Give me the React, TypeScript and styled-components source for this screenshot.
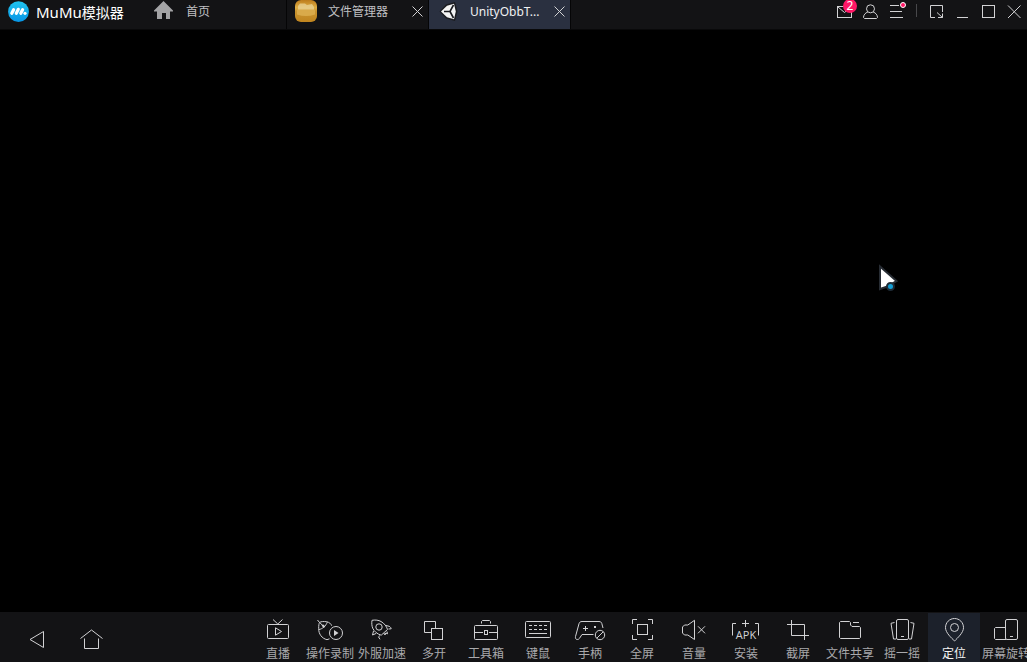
import React from 'react';
import styled, { createGlobalStyle } from 'styled-components';

const GlobalStyle = createGlobalStyle`
  * { box-sizing: border-box; }
  html, body, #root { height: 100%; }
  body {
    margin: 0;
    background: #000;
    overflow: hidden;
    font-family: "Noto Sans", "Noto Sans CJK SC", sans-serif;
  }
  button {
    margin: 0;
    padding: 0;
    border: 0;
    background: none;
    color: inherit;
    font: inherit;
    cursor: pointer;
  }
  svg { display: block; flex: none; }
`;

const Window = styled.div`
  display: flex;
  flex-direction: column;
  height: 100%;
  min-height: 320px;
  color: #c0c0c3;
`;

const TitleBar = styled.header`
  flex: none;
  display: flex;
  height: 30px;
  background: #131315;
  border-bottom: 1px solid #09090a;
`;

const Brand = styled.div`
  flex: none;
  display: flex;
  align-items: center;
  gap: 7px;
  width: 145px;
  height: 24px;
  padding-left: 8px;
  color: #fff;
  font-size: 14px;
  line-height: 24px;
  white-space: nowrap;
`;

const BrandLatin = styled.span`
  font-size: 15px;
`;

const Tabs = styled.nav`
  display: flex;
  flex: none;
`;

const Tab = styled.div<{ $active?: boolean }>`
  display: flex;
  width: 142px;
  height: 29px;
  padding-bottom: 5px;
  background: ${(p) => (p.$active ? '#2a3040' : 'transparent')};
  color: ${(p) => (p.$active ? '#f0f0f2' : '#c0c0c3')};
  border-right: 1px solid #050506;
`;

const TabButton = styled.button<{ $inset: number; $gap: number }>`
  flex: 1;
  display: flex;
  align-items: center;
  gap: ${(p) => p.$gap}px;
  padding-left: ${(p) => p.$inset}px;
  font-size: 12px;
  line-height: 24px;
  white-space: nowrap;
`;

const CloseTab = styled.button`
  flex: none;
  width: 20px;
  height: 24px;
`;

const Controls = styled.div`
  display: flex;
  margin-left: auto;
  height: 24px;
`;

const ControlButton = styled.button`
  position: relative;
  width: 26px;
  height: 24px;
`;

const Badge = styled.span`
  position: absolute;
  top: -1px;
  right: 1px;
  width: 14px;
  height: 14px;
  border-radius: 50%;
  background: #ff1766;
  color: #fff;
  font-size: 12px;
  line-height: 14px;
  text-align: center;
`;

const Divider = styled.span`
  width: 1px;
  height: 13px;
  margin: 4px 6px;
  background: #48484b;
`;

const Screen = styled.main`
  position: relative;
  flex: 1;
  background: #000;
`;

const Pointer = styled.svg`
  position: absolute;
  top: 233px;
  right: 128px;
`;

const BottomBar = styled.footer`
  flex: none;
  display: flex;
  height: 50px;
  background: #131315;
`;

const SystemKeys = styled.nav`
  flex: none;
  display: flex;
  align-items: center;
  gap: 23px;
  width: 252px;
  padding: 9px 0 0 21px;
`;

const SystemKey = styled.button`
  width: 32px;
  height: 32px;
`;

const Tools = styled.nav`
  flex: 1;
  display: flex;
  overflow: hidden;
  padding-top: 1px;
`;

const ToolButton = styled.button<{ $active?: boolean }>`
  flex: none;
  display: flex;
  flex-direction: column;
  align-items: center;
  width: 52px;
  padding-top: 3px;
  background: ${(p) => (p.$active ? '#1c212b' : 'transparent')};
  color: ${(p) => (p.$active ? '#f4f4f5' : '#a9a9ac')};
`;

const ToolLabel = styled.span`
  height: 18px;
  font-size: 12px;
  line-height: 20px;
  white-space: nowrap;
`;

const Line = styled.svg`
  fill: none;
  stroke: #d2d2d4;
  stroke-width: 1;
`;

type ControlProps = { label: string; children: React.ReactNode; badge?: string };

function Control({ label, children, badge }: ControlProps) {
  return (
    <ControlButton aria-label={label}>
      <Line width="26" height="24" viewBox="0 0 26 24">{children}</Line>
      {badge && <Badge>{badge}</Badge>}
    </ControlButton>
  );
}

function CloseIcon() {
  return (
    <Line width="20" height="24" viewBox="0 0 20 24">
      <path d="M4.500 6.500l10 10M14.500 6.500l-10 10" />
    </Line>
  );
}

const tools: { label: string; active?: boolean; icon: React.ReactNode }[] = [
  {
    label: '直播',
    icon: (
      <>
        <rect x="5.500" y="8.500" width="21" height="14" rx="1" />
        <path d="M11 3.500l4.800 4.500 4.700-4.500M13.500 11.800v7.400l6-3.700z" />
      </>
    ),
  },
  {
    label: '操作录制',
    icon: (
      <>
        <path d="M3.500 4l2 2.500M15.500 22.800l-2.500.9C8 22.500 4.500 18 4.700 12.500c0-3 .2-5.300 1-6.200 1.300-.8 4.300-.9 7-.6 2.500.6 4.300 2 5 4M5 13.500c3.300-.5 7-3.500 8.300-7.500M5.700 6.500l4 4" />
        <path d="M8.300 9l2.300 2.300" strokeWidth="2" />
        <circle cx="22" cy="17" r="6.500" />
        <path d="M20 14v6l4.500-3z" fill="#d2d2d4" stroke="none" />
      </>
    ),
  },
  {
    label: '外服加速',
    icon: (
      <>
        <path d="M6 4.300c3.500-.6 6.500-.2 9 1.200 3.500 2 5.500 4.800 6.500 8l-6.300 5.700c-4-1.200-7-3.700-8.500-7C5.700 9.700 5.600 7 6 4.300z" />
        <circle cx="13" cy="11" r="3.200" />
        <path d="M20 9.500l3.200.8c1.200.6 1.800 1.500 2 2.500l-2.700.2M7.500 15l-1 4 3.500-1.500M14 19.500l-1.500 1.300 1.500 2.500M17.800 17l1.200 2 .8-2 1.700.8-.5-2.300" />
      </>
    ),
  },
  {
    label: '多开',
    icon: (
      <>
        <path d="M17.500 12.500v-7h-11v11h7" />
        <rect x="13.500" y="12.500" width="11" height="11" />
      </>
    ),
  },
  {
    label: '工具箱',
    icon: (
      <>
        <rect x="4.500" y="9.500" width="23" height="14" rx="1" />
        <path d="M11.500 7.500v-2l1-1h7l1 1v2M5 16.500h8M19 16.500h8" />
        <rect x="14.500" y="14.500" width="3" height="4" />
      </>
    ),
  },
  {
    label: '键鼠',
    icon: (
      <>
        <rect x="3.500" y="5.500" width="25" height="16" rx="1" />
        <path d="M7 9.500h18M7 13.500h18" strokeDasharray="3 2" />
        <path d="M7 17.500h18" />
      </>
    ),
  },
  {
    label: '手柄',
    icon: (
      <>
        <path d="M29 12l-1.200-4.500c-.5-1.400-1.300-2-2.800-2H8c-1.700 0-2.600.8-3 2.200L1.500 20.500c-.3 1.800.3 3 1.800 3 1 0 1.600-.4 2.200-1.200l2.500-3.800h11.500M11.500 10v5M9 12.500h5" />
        <path d="M20 11h2" strokeWidth="2" />
        <circle cx="26" cy="19" r="4.700" />
        <path d="M22.700 22.300l6.600-6.600" />
      </>
    ),
  },
  {
    label: '全屏',
    icon: (
      <>
        <path d="M6.500 8V3.500H11M22 3.500h4.500V8M26.500 19v4.500H22M11 23.500H6.500V19" />
        <rect x="11.500" y="8.500" width="10" height="10" />
      </>
    ),
  },
  {
    label: '音量',
    icon: (
      <path d="M16.500 4.300v19.200L9.800 19H6.500l-2-2v-6l2-2h3.300zM20 10.300l7 7M27 10.300l-7 7" />
    ),
  },
  {
    label: '安装',
    icon: (
      <>
        <path d="M6 7.500H2.500v12M25 7.500h3.500v12M15.500 4v7M12 7.500h7" />
        <text x="16" y="23" textAnchor="middle" fontSize="11" fontFamily="Open Sans, sans-serif" fill="#d2d2d4" stroke="none">APK</text>
      </>
    ),
  },
  {
    label: '截屏',
    icon: <path d="M9.500 4v15.500H27M5 8.500h17.500V24" />,
  },
  {
    label: '文件共享',
    icon: (
      <path d="M6.500 5.500h9l1 1v2.500l1.500 1.500h7.500l1 1v10l-1 1h-19l-1-1v-15zM19 6.500h6" />
    ),
  },
  {
    label: '摇一摇',
    icon: (
      <>
        <rect x="10.500" y="3.500" width="12" height="20" rx="1.500" />
        <path d="M15 20.500h3M8.500 6.500l-3.500.8L7.500 23H10M24.500 6.500l3.500.8L25.500 23H23" />
      </>
    ),
  },
  {
    label: '定位',
    active: true,
    icon: (
      <>
        <path d="M16.500 25c-3-3-9-8.300-9-13.300 0-5.200 4-9.200 9-9.200s9 4 9 9.200c0 5-6 10.300-9 13.300z" />
        <circle cx="16.500" cy="11.500" r="4" />
      </>
    ),
  },
  {
    label: '屏幕旋转',
    icon: (
      <>
        <rect x="15.500" y="3.500" width="12" height="20" rx="1.500" />
        <path d="M20 20.500h3M15 11.500H5.500l-1 1v10l1 1H16" />
      </>
    ),
  },
];

export default function App() {
  return (
    <Window>
      <GlobalStyle />
      <TitleBar>
        <Brand>
          <svg width="21" height="24" viewBox="0 0 21 24">
            <defs>
              <linearGradient id="brandBlue" x1="0" y1="0" x2="0" y2="1">
                <stop offset="0" stopColor="#20c3ee" />
                <stop offset="1" stopColor="#0795e6" />
              </linearGradient>
            </defs>
            <circle cx="10.500" cy="11.700" r="10.400" fill="url(#brandBlue)" />
            <path d="M3.800 13.300l1.800-3.600M8.300 13.300l2-4M12.800 13.300l1.800-3.600" stroke="#fff" strokeWidth="3.200" strokeLinecap="round" />
            <circle cx="17" cy="13.300" r="1.600" fill="#fff" />
          </svg>
          <span><BrandLatin>MuMu</BrandLatin>模拟器</span>
        </Brand>
        <Tabs aria-label="标签页">
          <Tab>
            <TabButton $inset={8} $gap={12}>
              <svg width="21" height="24" viewBox="0 0 21 24">
                <path d="M10.500 1L1 10.500v1h3V19h5v-6h4v6h4v-7.500h3v-1z" fill="#a3a3a5" />
              </svg>
              首页
            </TabButton>
          </Tab>
          <Tab>
            <TabButton $inset={8} $gap={11}>
              <svg width="22" height="24" viewBox="0 0 22 24">
                <defs>
                  <linearGradient id="folderGold" x1="0" y1="0" x2="0" y2="1">
                    <stop offset="0" stopColor="#bd7c1c" />
                    <stop offset=".35" stopColor="#dfae45" />
                    <stop offset=".5" stopColor="#c99430" />
                    <stop offset="1" stopColor="#c0851f" />
                  </linearGradient>
                </defs>
                <rect width="22" height="22" rx="6" fill="url(#folderGold)" />
                <path d="M3 6l2-2.500h5L12 5l5-1 2 3v3H3z" fill="#ead49a" opacity=".75" />
                <path d="M2 9.500h18v5q-9 3-18 0z" fill="#d9aa4a" />
              </svg>
              文件管理器
            </TabButton>
            <CloseTab aria-label="关闭 文件管理器"><CloseIcon /></CloseTab>
          </Tab>
          <Tab $active>
            <TabButton $inset={10} $gap={11}>
              <svg width="20" height="24" viewBox="0 0 20 24">
                <path d="M.5 11.500L7 4.500 16 2l2.500 9.500L16 21l-9-2.500z" fill="#1b1c20" />
                <path d="M2 11.500l6-5.700 7-2 1.800 7.700-1.800 7.700-7-2z" fill="#f4f4f4" />
                <path d="M5 11.500h6l3.500-6.500M11 11.500l3.500 6.500" stroke="#1b1c20" strokeWidth="1.600" fill="none" />
              </svg>
              UnityObbT...
            </TabButton>
            <CloseTab aria-label="关闭 UnityObbT"><CloseIcon /></CloseTab>
          </Tab>
        </Tabs>
        <Controls>
          <Control label="消息" badge="2">
            <rect x="5.500" y="6.500" width="14" height="11" />
            <path d="M6 7l6.500 5.500L19 7" />
          </Control>
          <Control label="账号">
            <circle cx="12.500" cy="8.800" r="4" />
            <path d="M9.800 12c-2.500.8-4.300 3-4.300 5.500l1 1h12l1-1c0-2.500-1.800-4.700-4.300-5.500" />
          </Control>
          <Control label="菜单">
            <path d="M6 5.500h9M6 11.500h12M6 17.500h13" />
            <circle cx="19" cy="5" r="2.500" fill="#ff1766" stroke="#fff" />
          </Control>
          <Divider />
          <Control label="小窗">
            <path d="M12 17.500H7.500v-12h12V12M14 12.500l5.500 5M19.500 13.500v4H15" />
          </Control>
          <Control label="最小化"><path d="M8 17.500h11" /></Control>
          <Control label="最大化"><rect x="7.500" y="5.500" width="12" height="12" /></Control>
          <Control label="关闭"><path d="M7 5.500l12.500 12.500M19.500 5.500L7 18" /></Control>
        </Controls>
      </TitleBar>
      <Screen>
        <Pointer width="22" height="30" viewBox="0 0 22 30">
          <path d="M3 3.500V26l6-2 10.500-6z" fill="#fff" stroke="#272c33" strokeWidth="2" />
          <circle cx="13.500" cy="23.500" r="3.500" fill="#149fd5" stroke="#1e2b36" strokeWidth="2" />
        </Pointer>
      </Screen>
      <BottomBar>
        <SystemKeys aria-label="系统按键">
          <SystemKey aria-label="返回">
            <Line width="32" height="32" viewBox="0 0 32 32"><path d="M22.500 5.500v16L9 13.500z" /></Line>
          </SystemKey>
          <SystemKey aria-label="主屏幕">
            <Line width="32" height="32" viewBox="0 0 32 32"><path d="M4.500 12.500L15.500 4l11 8.500M8.500 12.500v10h14v-10" /></Line>
          </SystemKey>
        </SystemKeys>
        <Tools aria-label="工具">
          {tools.map((tool) => (
            <ToolButton key={tool.label} $active={tool.active}>
              <Line width="32" height="28" viewBox="0 0 32 28">{tool.icon}</Line>
              <ToolLabel>{tool.label}</ToolLabel>
            </ToolButton>
          ))}
        </Tools>
      </BottomBar>
    </Window>
  );
}
